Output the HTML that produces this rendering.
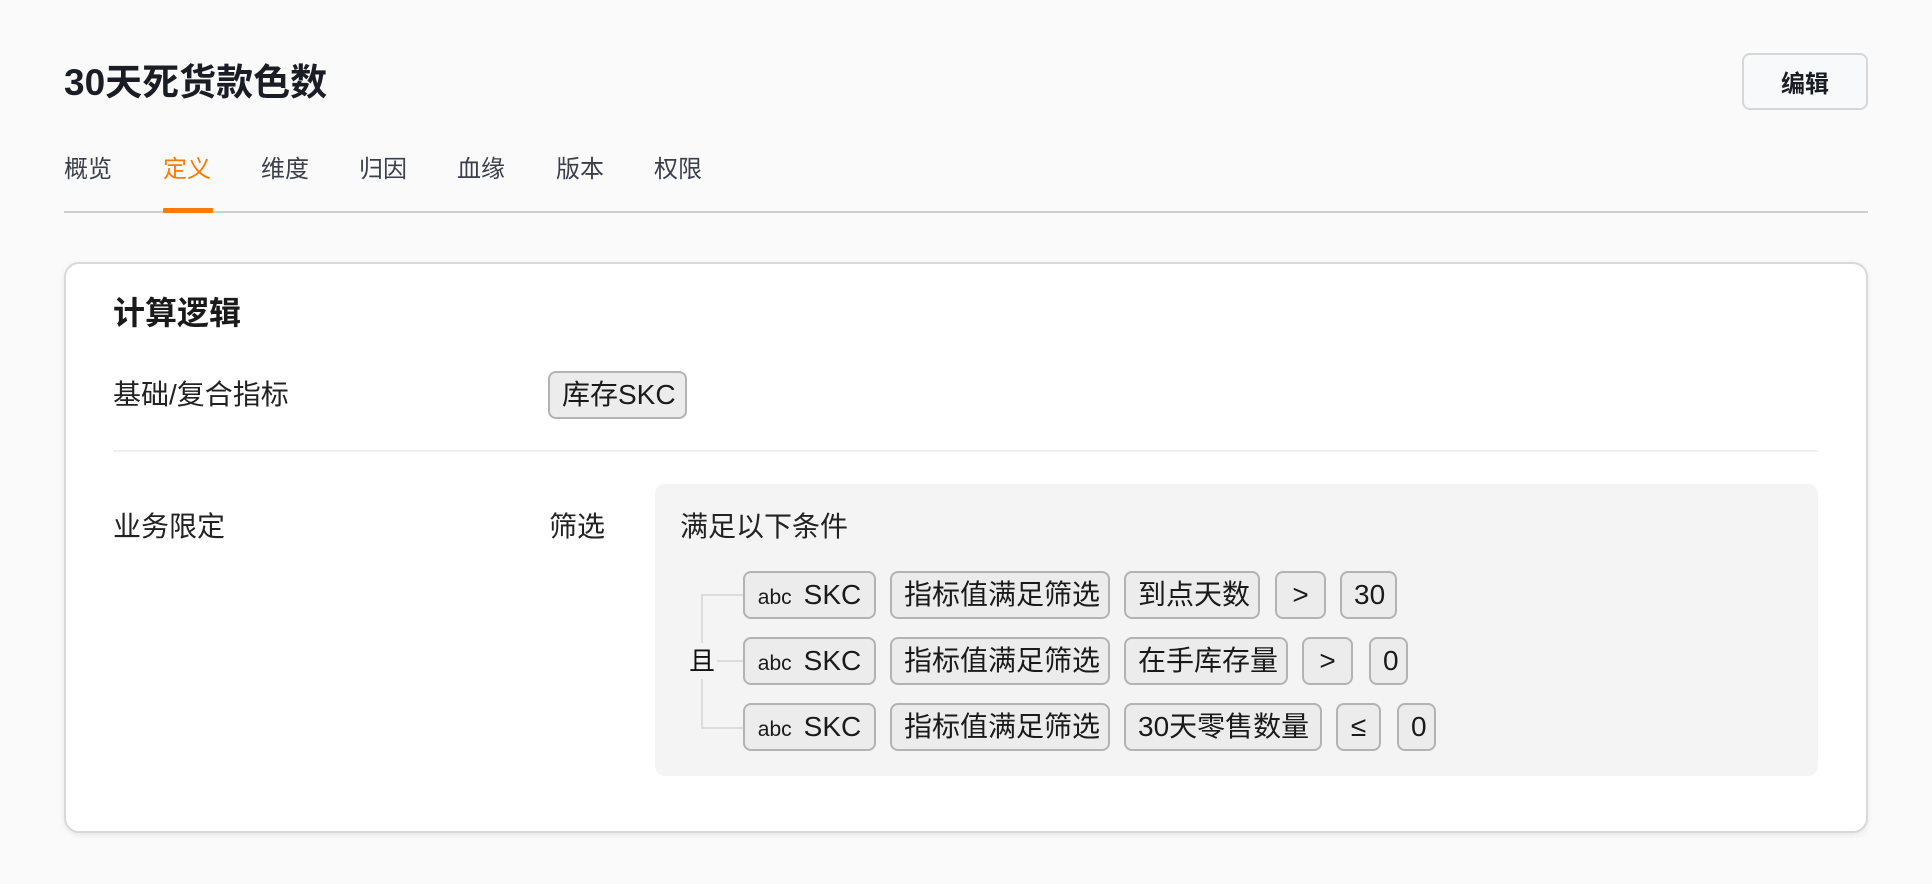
<!DOCTYPE html>
<html><head><meta charset="utf-8">
<style>
*{margin:0;padding:0;box-sizing:border-box}
html,body{width:1932px;height:884px;background:#fafafa;overflow:hidden}
body{font-family:"Liberation Sans","Noto Sans CJK SC",sans-serif;color:#1f1f1f;position:relative}
.abs{position:absolute;white-space:nowrap}
.title{left:64px;top:58px;font-size:37px;font-weight:bold;line-height:50px;color:#1a1d24}
.btn{left:1742px;top:53px;width:126px;height:57px;border:2px solid #d6d6d6;border-radius:8px;background:#f8f9fb;font-size:24px;font-weight:bold;display:flex;align-items:center;justify-content:center;color:#1a1d24}
.tab{top:154px;font-size:24px;line-height:32px;color:#3a3f4a}
.tab.on{color:#ff7a00}
.tabline{left:64px;top:211px;width:1804px;height:2px;background:#cfcfcf}
.tabbar{left:163px;top:208px;width:50px;height:5px;background:#ff7a00;border-radius:1px}
.card{left:64px;top:262px;width:1804px;height:571px;background:#fff;border:2px solid #d9d9d9;border-radius:15px;box-shadow:0 2px 6px rgba(0,0,0,.08)}
.h{left:113px;top:292px;font-size:32px;font-weight:bold;line-height:42px;color:#1a1a1a}
.lbl{font-size:28px;line-height:40px;color:#222}
.chip{position:absolute;height:48px;border:2px solid #b3b3b3;border-radius:8px;background:#ececec;font-size:28px;line-height:44px;padding:0 12px;white-space:nowrap;color:#1a1a1a;text-align:center}
.divider{left:113px;top:450px;width:1705px;height:2px;background:#f0f0f0}
.box{left:655px;top:484px;width:1163px;height:292px;background:#f4f4f4;border-radius:10px}
.abc{font-size:21px;margin-right:12px}
.ln{position:absolute;background:#dcdcdc}
</style></head><body>
<div class="abs title">30天死货款色数</div>
<div class="abs btn">编辑</div>
<div class="abs tab" style="left:64px">概览</div>
<div class="abs tab on" style="left:163px">定义</div>
<div class="abs tab" style="left:261px">维度</div>
<div class="abs tab" style="left:359px">归因</div>
<div class="abs tab" style="left:457px">血缘</div>
<div class="abs tab" style="left:556px">版本</div>
<div class="abs tab" style="left:654px">权限</div>
<div class="abs tabline"></div>
<div class="abs tabbar"></div>
<div class="abs card"></div>
<div class="abs h">计算逻辑</div>
<div class="abs lbl" style="left:113px;top:375px">基础/复合指标</div>
<div class="chip" style="left:548px;top:371px;width:139px">库存SKC</div>
<div class="abs divider"></div>
<div class="abs lbl" style="left:113px;top:507px">业务限定</div>
<div class="abs lbl" style="left:549px;top:507px">筛选</div>
<div class="abs box"></div>
<div class="abs lbl" style="left:680px;top:507px">满足以下条件</div>
<div class="ln" style="left:701px;top:594px;width:2px;height:134px"></div>
<div class="ln" style="left:701px;top:594px;width:42px;height:2px"></div>
<div class="ln" style="left:701px;top:660px;width:42px;height:2px"></div>
<div class="ln" style="left:701px;top:727px;width:42px;height:2px"></div>
<div class="abs" style="left:687px;top:643px;width:30px;height:36px;background:#f4f4f4;font-size:26px;line-height:36px;text-align:center;color:#111">且</div>

<div class="chip" style="left:743px;top:571px;width:133px"><span class="abc">abc</span>SKC</div>
<div class="chip" style="left:890px;top:571px;width:220px">指标值满足筛选</div>
<div class="chip" style="left:1124px;top:571px;width:136px">到点天数</div>
<div class="chip" style="left:1275px;top:571px;width:51px">&gt;</div>
<div class="chip" style="left:1340px;top:571px;width:57px">30</div>

<div class="chip" style="left:743px;top:637px;width:133px"><span class="abc">abc</span>SKC</div>
<div class="chip" style="left:890px;top:637px;width:220px">指标值满足筛选</div>
<div class="chip" style="left:1124px;top:637px;width:164px">在手库存量</div>
<div class="chip" style="left:1302px;top:637px;width:51px">&gt;</div>
<div class="chip" style="left:1369px;top:637px;width:39px">0</div>

<div class="chip" style="left:743px;top:703px;width:133px"><span class="abc">abc</span>SKC</div>
<div class="chip" style="left:890px;top:703px;width:220px">指标值满足筛选</div>
<div class="chip" style="left:1124px;top:703px;width:198px">30天零售数量</div>
<div class="chip" style="left:1336px;top:703px;width:45px">≤</div>
<div class="chip" style="left:1397px;top:703px;width:39px">0</div>
</body></html>
